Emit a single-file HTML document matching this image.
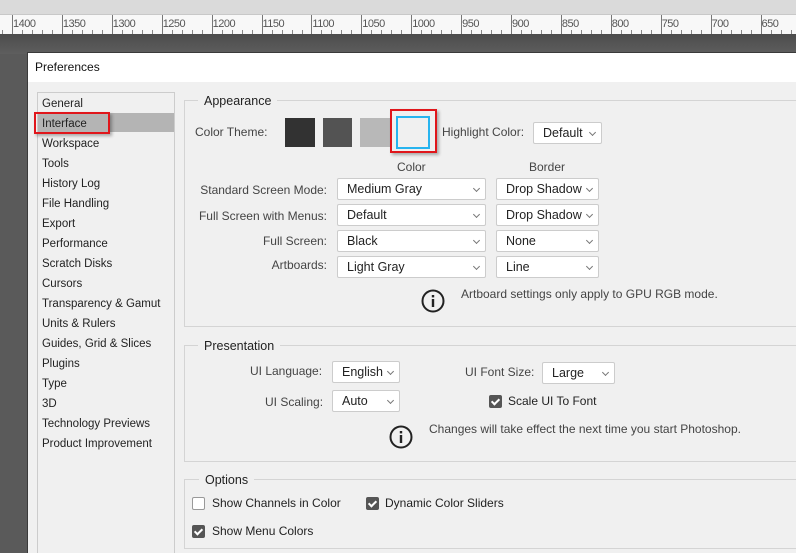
<!DOCTYPE html>
<html><head><meta charset="utf-8"><style>
*{margin:0;padding:0;box-sizing:border-box}
html{width:796px;height:553px;overflow:hidden}
body{width:796px;height:553px;overflow:hidden;background:#5a5a5a;font-family:"Liberation Sans",sans-serif;font-size:12px;color:#333;position:relative}
.a{position:absolute;white-space:nowrap}
#top{left:0;top:0;width:796px;height:14px;background:#dadada}
#ruler{left:0;top:14px;width:796px;height:20px;background:#f8f8f8;border-top:1px solid #c8c8c8}
#dark{left:0;top:34px;width:796px;height:20px;background:linear-gradient(#4c4c4c,#5e5e5e)}
#dlg{left:27px;top:52px;width:769px;height:501px;background:#f0f0f0;border-left:1px solid #3a3a3a;border-top:1px solid #3a3a3a}
#title{left:27px;top:52px;width:769px;height:30px;background:#fff;border-left:1px solid #3a3a3a;border-top:1px solid #3a3a3a}
#list{left:37px;top:92px;width:138px;height:461px;border:1px solid #ccc;border-bottom:none;background:#f0f0f0}
.li{left:42px;font-size:11.5px;color:#222}
.fs{border:1px solid #d4d4d4;border-right:none}
.lg{background:#f0f0f0;padding:0 6px;font-size:12.5px;color:#222}
.dd{height:22px;background:#fff;border:1px solid #ccc;border-radius:2px;font-size:12.5px;color:#222;padding:3px 9px}
.dd:after{content:"";position:absolute;right:6px;top:7px;width:4px;height:4px;border-right:1px solid #777;border-bottom:1px solid #777;transform:rotate(45deg)}
.r{font-size:12px;color:#444;text-align:right}
.cb{width:13px;height:13px;border-radius:2px;background:#555}
.cb.on:after{content:"";position:absolute;left:4px;top:2px;width:3px;height:6px;border-right:2px solid #fff;border-bottom:2px solid #fff;transform:rotate(45deg)}
.cb.off{background:#fff;border:1px solid #999}
</style></head><body>
<div class="a" id="top"></div>
<div class="a" id="ruler"></div>
<div id="ticks"></div>
<div class="a" id="dark"></div>
<div class="a" id="dlg"></div>
<div class="a" id="title"></div>
<div class="a" style="left:35px;top:60px;font-size:12px;color:#111">Preferences</div>

<div class="a" id="list"></div>
<div class="a" style="left:38px;top:113px;width:136px;height:19px;background:#b4b4b4"></div>
<div class="a" style="left:34px;top:112px;width:76px;height:22px;border:2px solid #e0161b;box-shadow:2px 2px 3px rgba(0,0,0,.3)"></div>
<div class="a li" style="top:98px">General</div>
<div class="a li" style="top:118px">Interface</div>
<div class="a li" style="top:138px">Workspace</div>
<div class="a li" style="top:158px">Tools</div>
<div class="a li" style="top:178px">History Log</div>
<div class="a li" style="top:198px">File Handling</div>
<div class="a li" style="top:218px">Export</div>
<div class="a li" style="top:238px">Performance</div>
<div class="a li" style="top:258px">Scratch Disks</div>
<div class="a li" style="top:278px">Cursors</div>
<div class="a li" style="top:298px">Transparency &amp; Gamut</div>
<div class="a li" style="top:318px">Units &amp; Rulers</div>
<div class="a li" style="top:338px">Guides, Grid &amp; Slices</div>
<div class="a li" style="top:358px">Plugins</div>
<div class="a li" style="top:378px">Type</div>
<div class="a li" style="top:398px">3D</div>
<div class="a li" style="top:418px">Technology Previews</div>
<div class="a li" style="top:438px">Product Improvement</div>

<!-- Appearance -->
<div class="a fs" style="left:184px;top:100px;width:612px;height:227px"></div>
<div class="a lg" style="left:198px;top:94px">Appearance</div>
<div class="a r" style="left:195px;top:125px">Color Theme:</div>
<div class="a" style="left:285px;top:118px;width:30px;height:29px;background:#323232"></div>
<div class="a" style="left:323px;top:118px;width:29px;height:29px;background:#535353"></div>
<div class="a" style="left:360px;top:118px;width:30px;height:29px;background:#b8b8b8"></div>
<div class="a" style="left:396px;top:116px;width:34px;height:33px;border:2px solid #27b4ef;background:#f0f0f0"></div>
<div class="a" style="left:390px;top:109px;width:47px;height:44px;border:2px solid #e0161b;box-shadow:2px 2px 3px rgba(0,0,0,.3)"></div>
<div class="a r" style="left:442px;top:125px">Highlight Color:</div>
<div class="a dd" style="left:533px;top:122px;width:69px">Default</div>
<div class="a r" style="left:397px;top:160px">Color</div>
<div class="a r" style="left:529px;top:160px">Border</div>
<div class="a r" style="left:185px;top:183px;width:142px">Standard Screen Mode:</div>
<div class="a r" style="left:185px;top:209px;width:142px">Full Screen with Menus:</div>
<div class="a r" style="left:185px;top:234px;width:142px">Full Screen:</div>
<div class="a r" style="left:185px;top:258px;width:142px">Artboards:</div>
<div class="a dd" style="left:337px;top:178px;width:149px">Medium Gray</div>
<div class="a dd" style="left:337px;top:204px;width:149px">Default</div>
<div class="a dd" style="left:337px;top:230px;width:149px">Black</div>
<div class="a dd" style="left:337px;top:256px;width:149px">Light Gray</div>
<div class="a dd" style="left:496px;top:178px;width:103px">Drop Shadow</div>
<div class="a dd" style="left:496px;top:204px;width:103px">Drop Shadow</div>
<div class="a dd" style="left:496px;top:230px;width:103px">None</div>
<div class="a dd" style="left:496px;top:256px;width:103px">Line</div>
<svg class="a" style="left:421px;top:289px" width="24" height="24"><circle cx="12" cy="12" r="10.5" fill="none" stroke="#222" stroke-width="2"/><rect x="10.8" y="10" width="2.4" height="8" fill="#222"/><rect x="10.8" y="6" width="2.4" height="2.4" fill="#222"/></svg>
<div class="a r" style="left:461px;top:287px">Artboard settings only apply to GPU RGB mode.</div>

<!-- Presentation -->
<div class="a fs" style="left:184px;top:345px;width:612px;height:117px"></div>
<div class="a lg" style="left:198px;top:339px">Presentation</div>
<div class="a r" style="left:250px;top:364px">UI Language:</div>
<div class="a dd" style="left:332px;top:361px;width:68px">English</div>
<div class="a r" style="left:265px;top:395px">UI Scaling:</div>
<div class="a dd" style="left:332px;top:390px;width:68px">Auto</div>
<div class="a r" style="left:465px;top:365px">UI Font Size:</div>
<div class="a dd" style="left:542px;top:362px;width:73px">Large</div>
<div class="a cb on" style="left:489px;top:395px"></div>
<div class="a" style="left:508px;top:394px;color:#222">Scale UI To Font</div>
<svg class="a" style="left:389px;top:425px" width="24" height="24"><circle cx="12" cy="12" r="10.5" fill="none" stroke="#222" stroke-width="2"/><rect x="10.8" y="10" width="2.4" height="8" fill="#222"/><rect x="10.8" y="6" width="2.4" height="2.4" fill="#222"/></svg>
<div class="a r" style="left:429px;top:422px">Changes will take effect the next time you start Photoshop.</div>

<!-- Options -->
<div class="a fs" style="left:184px;top:479px;width:612px;height:70px"></div>
<div class="a lg" style="left:199px;top:473px">Options</div>
<div class="a cb off" style="left:192px;top:497px"></div>
<div class="a" style="left:212px;top:496px;color:#222">Show Channels in Color</div>
<div class="a cb on" style="left:366px;top:497px"></div>
<div class="a" style="left:385px;top:496px;color:#222">Dynamic Color Sliders</div>
<div class="a cb on" style="left:192px;top:525px"></div>
<div class="a" style="left:212px;top:524px;color:#222">Show Menu Colors</div>

<script>
var t=document.getElementById('ticks'),h='';
var labels=[1400,1350,1300,1250,1200,1150,1100,1050,1000,950,900,850,800,750,700,650];
for(var i=0;i<16;i++){var x=12+i*49.9;
h+='<div class="a" style="left:'+x+'px;top:15px;width:1px;height:19px;background:#777"></div>';
h+='<div class="a" style="left:'+(x+1)+'px;top:18px;font-size:11px;color:#555;letter-spacing:-0.5px">'+labels[i]+'</div>';
for(var k=1;k<5;k++){h+='<div class="a" style="left:'+(x+k*10)+'px;top:30px;width:1px;height:4px;background:#888"></div>';}}
h+='<div class="a" style="left:2px;top:30px;width:1px;height:4px;background:#888"></div>';
t.innerHTML=h;
</script>
</body></html>
